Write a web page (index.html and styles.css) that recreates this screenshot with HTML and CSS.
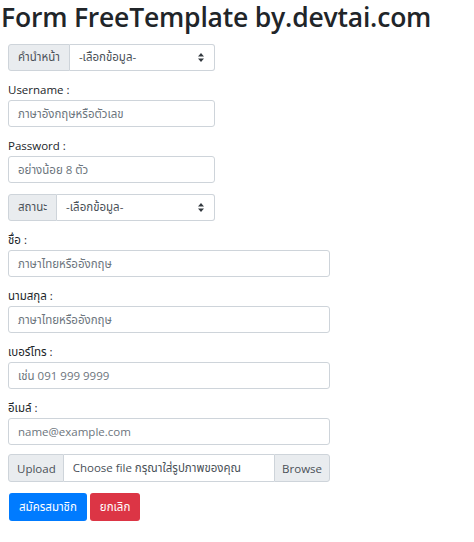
FILE: index.html
```html
<!DOCTYPE html>
<html lang="th">
<head>
<meta charset="utf-8">
<title>Form FreeTemplate</title>
<link rel="stylesheet" href="styles.css">
</head>
<body>
<h1 class="title">Form FreeTemplate by.devtai.com</h1>
<form class="form">
  <div class="group w-sm">
    <span class="addon">คำนำหน้า</span>
    <div class="select">-เลือกข้อมูล-<svg class="caret" width="6" height="9" viewBox="0 0 6 9"><path d="M3 0 L6 3.5 H0 Z M3 9 L6 5.5 H0 Z" fill="#343a40"/></svg></div>
  </div>
  <div class="field w-sm">
    <label class="label">Username :</label>
    <div class="input ph">ภาษาอังกฤษหรือตัวเลข</div>
  </div>
  <div class="field w-sm">
    <label class="label">Password :</label>
    <div class="input ph">อย่างน้อย 8 ตัว</div>
  </div>
  <div class="group w-sm">
    <span class="addon">สถานะ</span>
    <div class="select">-เลือกข้อมูล-<svg class="caret" width="6" height="9" viewBox="0 0 6 9"><path d="M3 0 L6 3.5 H0 Z M3 9 L6 5.5 H0 Z" fill="#343a40"/></svg></div>
  </div>
  <div class="field w-lg">
    <label class="label">ชื่อ :</label>
    <div class="input ph">ภาษาไทยหรืออังกฤษ</div>
  </div>
  <div class="field w-lg">
    <label class="label">นามสกุล :</label>
    <div class="input ph">ภาษาไทยหรืออังกฤษ</div>
  </div>
  <div class="field w-lg">
    <label class="label">เบอร์โทร :</label>
    <div class="input ph">เช่น 091 999 9999</div>
  </div>
  <div class="field w-lg">
    <label class="label">อีเมล์ :</label>
    <div class="input ph">name@example.com</div>
  </div>
  <div class="group w-lg upload">
    <span class="addon">Upload</span>
    <div class="file">Choose file กรุณาใส่รูปภาพของคุณ</div>
    <span class="browse">Browse</span>
  </div>
  <div class="actions">
    <button type="button" class="btn btn-primary">สมัครสมาชิก</button>
    <button type="button" class="btn btn-danger">ยกเลิก</button>
  </div>
</form>
</body>
</html>
```
FILE: styles.css
```css
* { box-sizing: border-box; }
body {
  margin: 0;
  background: #fff;
  color: #212529;
  font-family: "Open Sans", "Noto Sans", "Noto Sans Thai", "Loma", "Garuda", sans-serif;
  font-size: 11.5px;
}
.title {
  margin: 0 0 9px 1px;
  height: 35px;
  font-family: "Open Sans", "Noto Sans", sans-serif;
  font-weight: 600;
  font-size: 26.5px;
  letter-spacing: -0.2px;
  line-height: 35px;
  color: #212529;
  white-space: nowrap;
}
.form {
  margin-left: 8px;
  display: flex;
  flex-direction: column;
}
.w-sm { width: 207px; }
.w-lg { width: 322px; }
.group {
  display: flex;
  height: 27px;
  margin-bottom: 11px;
}
.upload { margin-top: -2px; margin-bottom: 11px; height: 28px; }
.field {
  display: flex;
  flex-direction: column;
  margin-bottom: 11px;
}
.label {
  display: block;
  height: 16px;
  line-height: 16px;
  margin-bottom: 2px;
  color: #212529;
}
.input {
  height: 27px;
  border: 1px solid #ced4da;
  border-radius: 3px;
  padding: 0 9px;
  line-height: 25px;
  color: #495057;
}
.ph { color: #6c757d; }
.addon {
  display: flex;
  align-items: center;
  padding: 0 9px;
  background: #e9ecef;
  border: 1px solid #ced4da;
  border-radius: 3px 0 0 3px;
  color: #495057;
  white-space: nowrap;
}
.upload .addon { padding: 0 7px 0 8px; }
.select {
  flex: 1;
  display: flex;
  align-items: center;
  justify-content: space-between;
  border: 1px solid #ced4da;
  border-left: 0;
  border-radius: 0 3px 3px 0;
  padding: 0 10px 0 9px;
  color: #495057;
}
.caret { display: block; }
.file {
  flex: 1;
  display: flex;
  align-items: center;
  border: 1px solid #ced4da;
  border-left: 0;
  border-right: 0;
  padding: 0 9px;
  color: #495057;
  white-space: nowrap;
}
.browse {
  display: flex;
  align-items: center;
  padding: 0 7px;
  background: #e9ecef;
  border: 1px solid #ced4da;
  border-radius: 0 3px 3px 0;
  color: #495057;
}
.actions {
  display: flex;
  gap: 3px;
  margin-left: 1px;
}
.btn {
  height: 28px;
  border: 0;
  border-radius: 3px;
  padding: 0 10px;
  font-family: inherit;
  font-size: 11.5px;
  color: #fff;
  cursor: pointer;
}
.btn-primary { background: #007bff; }
.btn-danger { background: #dc3545; padding: 0 10px; }
```
